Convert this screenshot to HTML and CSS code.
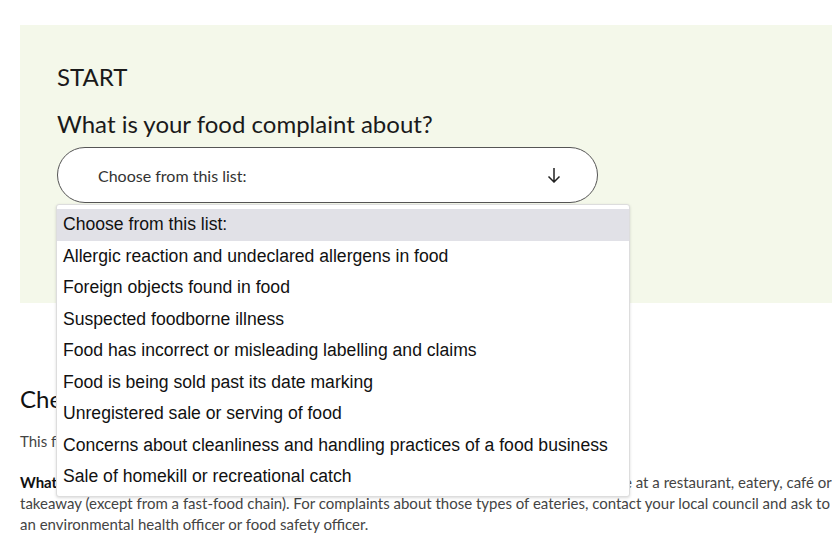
FILE: index.html
```html
<!DOCTYPE html>
<html>
<head>
<meta charset="utf-8">
<link rel="stylesheet" href="styles.css">
</head>
<body>
<div class="page">
  <section class="panel">
    <h2 class="step">START</h2>
    <h3 class="question">What is your food complaint about?</h3>
    <div class="select-wrap">
      <div class="select">
        <span class="select-text">Choose from this list:</span>
        <svg class="arrow" width="14" height="16" viewBox="0 0 14 16"><path d="M7 1 V15 M1.5 9.5 L7 15 L12.5 9.5" fill="none" stroke="#222" stroke-width="1.5"/></svg>
      </div>
      <ul class="options">
        <li class="opt selected">Choose from this list:</li>
        <li class="opt">Allergic reaction and undeclared allergens in food</li>
        <li class="opt">Foreign objects found in food</li>
        <li class="opt">Suspected foodborne illness</li>
        <li class="opt">Food has incorrect or misleading labelling and claims</li>
        <li class="opt">Food is being sold past its date marking</li>
        <li class="opt">Unregistered sale or serving of food</li>
        <li class="opt">Concerns about cleanliness and handling practices of a food business</li>
        <li class="opt">Sale of homekill or recreational catch</li>
      </ul>
    </div>
  </section>
  <section class="info">
    <h2 class="info-title">Check before you complain</h2>
    <p class="info-text">This form is for complaints about food.</p>
    <p class="info-text second"><b>What not to use this form for:</b> complaints about a meal or drinks that you had while you were at a restaurant, eatery, café or<br>takeaway (except from a fast-food chain). For complaints about those types of eateries, contact your local council and ask to speak to<br>an environmental health officer or food safety officer.</p>
  </section>
</div>
</body>
</html>
```
FILE: styles.css
```css
html, body {
  margin: 0;
  padding: 0;
  background: #ffffff;
  overflow: hidden;
}
body {
  width: 832px;
  height: 552px;
  font-family: Lato, "Noto Sans", sans-serif;
  color: #222;
}
.page {
  padding-top: 25px;
}
.panel {
  margin-left: 20px;
  background: #f4f8ea;
  height: 278px;
  padding: 37px 0 0 37px;
  box-sizing: border-box;
}
.step {
  margin: 0;
  font-weight: 400;
  font-size: 24px;
  line-height: 30px;
  color: #1a1a1a;
}
.question {
  margin: 17px 0 0;
  font-weight: 400;
  font-size: 24px;
  line-height: 30px;
  color: #1a1a1a;
}
.select-wrap {
  position: relative;
  margin-top: 8px;
  width: 541px;
}
.select {
  height: 56px;
  box-sizing: border-box;
  border: 1.5px solid #555;
  border-radius: 28px;
  background: #fff;
  display: flex;
  align-items: center;
  padding: 0 36px 0 40px;
}
.select-text {
  flex: 1;
  font-size: 16px;
  color: #333;
}
.arrow {
  display: block;
}
.options {
  position: absolute;
  left: -1px;
  top: 57px;
  width: 574px;
  margin: 0;
  padding: 4px 0 3px;
  list-style: none;
  background: #fff;
  border: 1px solid #ddd;
  border-radius: 3px;
  box-shadow: 0 1px 3px rgba(0,0,0,0.15);
  box-sizing: border-box;
  font-family: "Liberation Sans", Arial, sans-serif;
  font-size: 17.6px;
  color: #111;
}
.opt {
  height: 31.5px;
  line-height: 31.5px;
  padding-left: 6px;
  white-space: nowrap;
}
.opt.selected {
  background: #e1e1e7;
}
.info {
  padding: 81px 0 0 20px;
}
.info-title {
  margin: 0;
  font-weight: 400;
  font-size: 24px;
  line-height: 30px;
  color: #111;
}
.info-text {
  margin: 17px 0 0;
  font-size: 15px;
  line-height: 21px;
  color: #444;
  white-space: nowrap;
}
.info-text.second {
  margin-top: 20px;
}
.info-text b {
  color: #111;
}
```
